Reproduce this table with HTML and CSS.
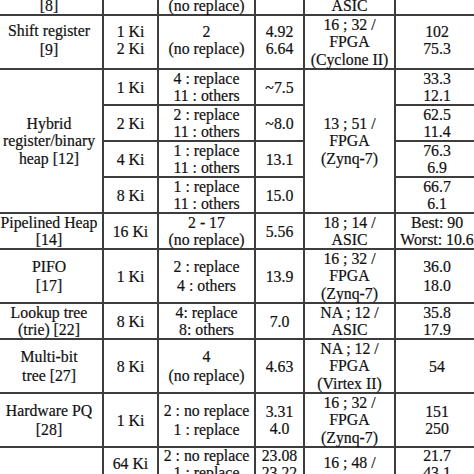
FILE: index.html
```html
<!DOCTYPE html>
<html>
<head>
<meta charset="utf-8">
<link rel="stylesheet" href="styles.css">
</head>
<body>
<table class="cmp">
  <colgroup>
    <col class="c1"><col class="c2"><col class="c3"><col class="c4"><col class="c5"><col class="c6">
  </colgroup>
  <tbody>
    <tr class="h36 tail">
      <td>[8]</td>
      <td></td>
      <td>(no replace)</td>
      <td></td>
      <td>ASIC</td>
      <td></td>
    </tr>
    <tr class="h54">
      <td class="wide up">Shift register<br>[9]</td>
      <td class="up">1 Ki<br>2 Ki</td>
      <td class="up">2<br>(no replace)</td>
      <td class="up">4.92<br>6.64</td>
      <td class="three">16 ; 32 /<br>FPGA<br>(Cyclone II)</td>
      <td class="up">102<br>75.3</td>
    </tr>
    <tr class="h36">
      <td rowspan="4" class="three">Hybrid<br>register/binary<br>heap [12]</td>
      <td>1 Ki</td>
      <td>4 : replace<br>11 : others</td>
      <td>~7.5</td>
      <td rowspan="4" class="three">13 ; 51 /<br>FPGA<br>(Zynq-7)</td>
      <td>33.3<br>12.1</td>
    </tr>
    <tr class="h36">
      <td>2 Ki</td>
      <td>2 : replace<br>11 : others</td>
      <td>~8.0</td>
      <td>62.5<br>11.4</td>
    </tr>
    <tr class="h35">
      <td>4 Ki</td>
      <td>1 : replace<br>11 : others</td>
      <td>13.1</td>
      <td>76.3<br>6.9</td>
    </tr>
    <tr class="h36">
      <td>8 Ki</td>
      <td>1 : replace<br>11 : others</td>
      <td>15.0</td>
      <td>66.7<br>6.1</td>
    </tr>
    <tr class="h36">
      <td>Pipelined Heap<br>[14]</td>
      <td>16 Ki</td>
      <td>2 - 17<br>(no replace)</td>
      <td>5.56</td>
      <td>18 ; 14 /<br>ASIC</td>
      <td>Best: 90<br>Worst: 10.6</td>
    </tr>
    <tr class="h54">
      <td class="wide">PIFO<br>[17]</td>
      <td>1 Ki</td>
      <td class="wide">2 : replace<br>4 : others</td>
      <td>13.9</td>
      <td class="three">16 ; 32 /<br>FPGA<br>(Zynq-7)</td>
      <td class="wide">36.0<br>18.0</td>
    </tr>
    <tr class="h36">
      <td>Lookup tree<br>(trie) [22]</td>
      <td>8 Ki</td>
      <td>4: replace<br>8: others</td>
      <td>7.0</td>
      <td>NA ; 12 /<br>ASIC</td>
      <td>35.8<br>17.9</td>
    </tr>
    <tr class="h54">
      <td class="wide">Multi-bit<br>tree [27]</td>
      <td>8 Ki</td>
      <td class="wide">4<br>(no replace)</td>
      <td>4.63</td>
      <td class="three">NA ; 12 /<br>FPGA<br>(Virtex II)</td>
      <td>54</td>
    </tr>
    <tr class="h54">
      <td class="wide">Hardware PQ<br>[28]</td>
      <td>1 Ki</td>
      <td class="wide">2 : no replace<br>1 : replace</td>
      <td>3.31<br>4.0</td>
      <td class="three">16 ; 32 /<br>FPGA<br>(Zynq-7)</td>
      <td>151<br>250</td>
    </tr>
    <tr class="h33 last">
      <td rowspan="2"></td>
      <td class="mid">64 Ki</td>
      <td>2 : no replace<br>1 : replace</td>
      <td>23.08<br>23.22</td>
      <td rowspan="2" class="first">16 ; 48 /</td>
      <td>21.7<br>43.1</td>
    </tr>
    <tr class="h36">
      <td></td>
      <td></td>
      <td></td>
      <td></td>
    </tr>
  </tbody>
</table>
</body>
</html>
```
FILE: styles.css
```css
html, body {
  margin: 0;
  padding: 0;
  background: #ffffff;
  overflow: hidden;
}

.cmp {
  margin: -22px 0 0 -6px;
  border-collapse: collapse;
  table-layout: fixed;
  width: 484px;
  font-family: "Liberation Serif", "Times New Roman", serif;
  font-size: 15.8px;
  line-height: 17px;
  color: #111111;
  -webkit-text-stroke: 0.2px #111111;
}

.c1 { width: 108px; }
.c2 { width: 55px; }
.c3 { width: 97px; }
.c4 { width: 49px; }
.c5 { width: 91px; }
.c6 { width: 84px; }

.cmp td {
  border: 2px solid #3d3d3d;
  padding: 0;
  text-align: center;
  vertical-align: middle;
  white-space: nowrap;
  overflow: visible;
}

.h33 { height: 33px; }
.h35 { height: 35px; }
.h36 { height: 36px; }
.h54 { height: 54px; }

.tail td { vertical-align: bottom; }

.cmp td.three { line-height: 17.3px; }
.cmp td.wide { line-height: 19px; }
.cmp td.up { padding-bottom: 4px; }
.cmp .last td { vertical-align: top; line-height: 16.5px; }
.cmp .last td.mid { vertical-align: middle; }
.cmp .last td.first { padding-top: 6px; line-height: 17px; }
```
